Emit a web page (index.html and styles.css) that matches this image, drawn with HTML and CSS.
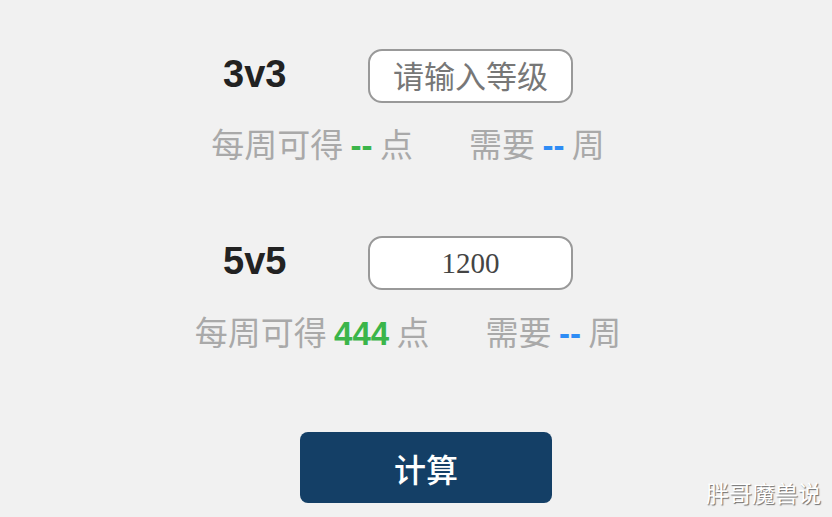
FILE: index.html
```html
<!DOCTYPE html>
<html lang="zh-CN">
<head>
<meta charset="utf-8">
<title>计算</title>
<link rel="stylesheet" href="styles.css">
</head>
<body>
<div class="page">
  <section class="block">
    <div class="row">
      <span class="mode">3v3</span>
      <div class="field"><span class="placeholder">请输入等级</span></div>
    </div>
    <div class="stats">
      <span class="stat">每周可得 <b class="green">--</b> 点</span>
      <span class="stat">需要 <b class="blue">--</b> 周</span>
    </div>
  </section>
  <section class="block block-second">
    <div class="row">
      <span class="mode">5v5</span>
      <div class="field"><span class="value">1200</span></div>
    </div>
    <div class="stats">
      <span class="stat">每周可得 <b class="green">444</b> 点</span>
      <span class="stat">需要 <b class="blue">--</b> 周</span>
    </div>
  </section>
  <div class="actions">
    <button class="calc">计算</button>
  </div>
  <div class="watermark">胖哥魔兽说</div>
</div>
</body>
</html>
```
FILE: styles.css
```css
html, body {
  margin: 0;
  padding: 0;
  background: #f1f1f1;
}
.page {
  position: relative;
  width: 832px;
  height: 517px;
  padding-top: 49px;
  box-sizing: border-box;
  font-family: "Noto Sans CJK SC", "Liberation Sans", sans-serif;
  overflow: hidden;
}
.block-second {
  margin-top: 73px;
}
.row {
  display: flex;
  justify-content: center;
  align-items: center;
  gap: 79px;
  padding-right: 36px;
  height: 54px;
}
.mode {
  width: 66px;
  font-family: "Liberation Sans", Arial, sans-serif;
  font-weight: bold;
  font-size: 38px;
  color: #222;
  line-height: 1;
  margin-top: -4px;
}
.field {
  width: 205px;
  height: 54px;
  box-sizing: border-box;
  border: 2px solid #999;
  border-radius: 14px;
  background: #fff;
  display: flex;
  align-items: center;
  justify-content: center;
}
.placeholder {
  font-family: "Noto Sans CJK SC", sans-serif;
  font-size: 31px;
  color: #777;
  line-height: 1;
  margin-top: -4px;
}
.value {
  font-family: "Liberation Serif", "Times New Roman", serif;
  font-size: 29px;
  color: #444;
  line-height: 1;
}
.stats {
  display: flex;
  justify-content: center;
  gap: 56px;
  padding-right: 16px;
  margin-top: 20px;
  height: 40px;
  line-height: 40px;
  font-size: 33px;
  color: #a9a9a9;
}
.block-second .stats {
  margin-top: 21px;
}
.stat {
  white-space: pre;
}
.stat b {
  font-family: "Liberation Sans", Arial, sans-serif;
  font-weight: bold;
}
.green { color: #3bb54a; }
.blue { color: #2e8cf5; }
.actions {
  display: flex;
  justify-content: center;
  padding-left: 20px;
  margin-top: 81px;
}
.calc {
  width: 252px;
  height: 71px;
  border: none;
  border-radius: 8px;
  background: #143f66;
  color: #fff;
  font-family: "Noto Sans CJK SC", sans-serif;
  font-size: 32px;
  font-weight: 500;
  padding: 0;
}
.watermark {
  position: absolute;
  left: 706px;
  top: 475px;
  font-family: "Noto Sans CJK SC", sans-serif;
  font-size: 23px;
  color: #fff;
  letter-spacing: 0;
  text-shadow: 1px 1px 1px rgba(0,0,0,0.55);
}
```
